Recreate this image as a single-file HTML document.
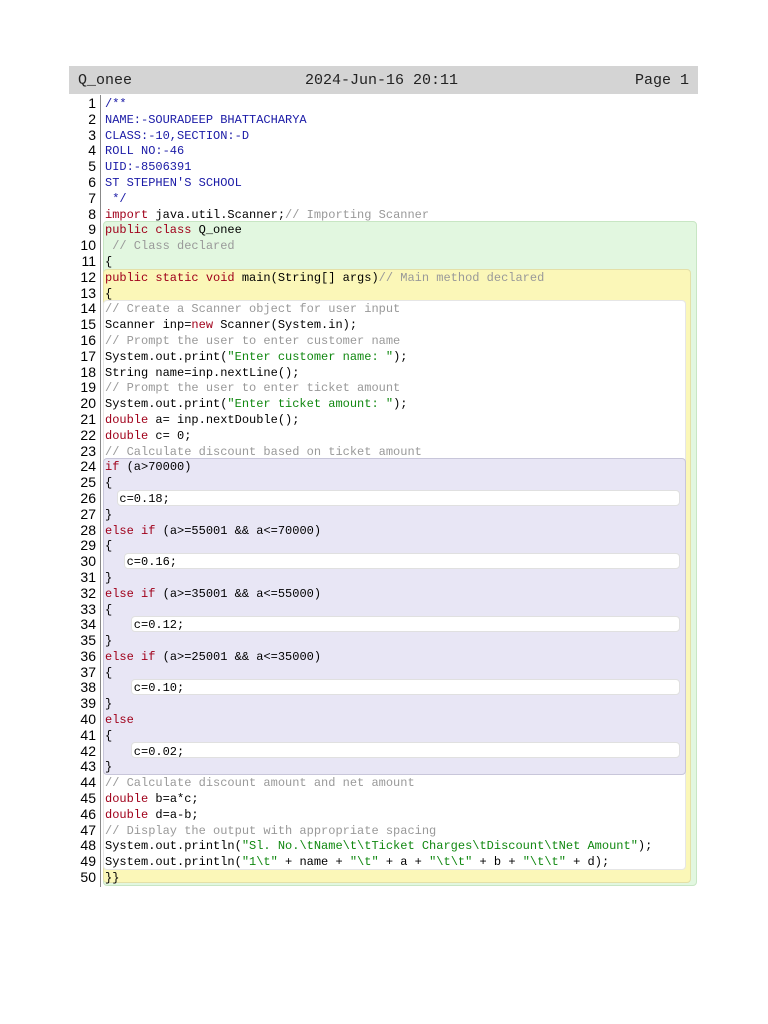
<!DOCTYPE html>
<html><head><style>
body{margin:0;background:#fff;width:768px;height:1024px;position:relative;overflow:hidden;font-family:"Liberation Mono",monospace}
.hdr{position:absolute;left:69px;top:66px;width:629px;height:28px;background:#d4d4d4;font-size:15px;color:#222;line-height:29px}
.hdr span{position:absolute;top:0}
.box{position:absolute;border-radius:4px;box-sizing:border-box}
.vl{position:absolute;left:100px;top:95px;width:1px;height:792px;background:#888}
.nums{position:absolute;left:70px;top:96px;width:26px;text-align:right;font-family:"Liberation Sans",sans-serif;font-size:14px;line-height:15.8px;color:#000;margin:0}
pre{position:absolute;left:105px;top:97px;margin:0;font-size:12px;line-height:15.8px;color:#000;font-family:"Liberation Mono",monospace}
.k{color:#a0001a}.c{color:#999}.s{color:#118811}.d{color:#1a1aa6}
</style></head><body>
<div class="hdr"><span style="left:9px">Q_onee</span><span style="left:236px">2024-Jun-16 20:11</span><span style="right:9px">Page 1</span></div>
<div class="box" style="left:103px;top:221px;width:594px;height:665px;background:#e2f7e0;border:1px solid #c8e6c4"></div>
<div class="box" style="left:103px;top:269px;width:588px;height:614px;background:#fbf7b8;border:1px solid #e4e0a8"></div>
<div class="box" style="left:103px;top:300px;width:583px;height:570px;background:#fff;border:1px solid #e6e6e6"></div>
<div class="box" style="left:103px;top:458px;width:583px;height:317px;background:#e8e6f5;border:1px solid #c8c6da"></div>
<div class="box" style="left:117px;top:490px;width:563px;height:16px;background:#fff;border:1px solid #e0e0e0"></div>
<div class="box" style="left:124px;top:553px;width:556px;height:16px;background:#fff;border:1px solid #e0e0e0"></div>
<div class="box" style="left:131px;top:616px;width:549px;height:16px;background:#fff;border:1px solid #e0e0e0"></div>
<div class="box" style="left:131px;top:679px;width:549px;height:16px;background:#fff;border:1px solid #e0e0e0"></div>
<div class="box" style="left:131px;top:742px;width:549px;height:16px;background:#fff;border:1px solid #e0e0e0"></div>
<div class="vl"></div>
<pre class="nums">1
2
3
4
5
6
7
8
9
10
11
12
13
14
15
16
17
18
19
20
21
22
23
24
25
26
27
28
29
30
31
32
33
34
35
36
37
38
39
40
41
42
43
44
45
46
47
48
49
50</pre>
<pre><span class="d">/**
NAME:-SOURADEEP BHATTACHARYA
CLASS:-10,SECTION:-D
ROLL NO:-46
UID:-8506391
ST STEPHEN'S SCHOOL
 */</span>
<span class="k">import</span> java.util.Scanner;<span class="c">// Importing Scanner</span>
<span class="k">public class</span> Q_onee
<span class="c"> // Class declared</span>
{
<span class="k">public static void</span> main(String[] args)<span class="c">// Main method declared</span>
{
<span class="c">// Create a Scanner object for user input</span>
Scanner inp=<span class="k">new</span> Scanner(System.in);
<span class="c">// Prompt the user to enter customer name</span>
System.out.print(<span class="s">"Enter customer name: "</span>);
String name=inp.nextLine();
<span class="c">// Prompt the user to enter ticket amount</span>
System.out.print(<span class="s">"Enter ticket amount: "</span>);
<span class="k">double</span> a= inp.nextDouble();
<span class="k">double</span> c= 0;
<span class="c">// Calculate discount based on ticket amount</span>
<span class="k">if</span> (a&gt;70000)
{
  c=0.18;
}
<span class="k">else if</span> (a&gt;=55001 &amp;&amp; a&lt;=70000)
{
   c=0.16;
}
<span class="k">else if</span> (a&gt;=35001 &amp;&amp; a&lt;=55000)
{
    c=0.12;
}
<span class="k">else if</span> (a&gt;=25001 &amp;&amp; a&lt;=35000)
{
    c=0.10;
}
<span class="k">else</span>
{
    c=0.02;
}
<span class="c">// Calculate discount amount and net amount</span>
<span class="k">double</span> b=a*c;
<span class="k">double</span> d=a-b;
<span class="c">// Display the output with appropriate spacing</span>
System.out.println(<span class="s">"Sl. No.\tName\t\tTicket Charges\tDiscount\tNet Amount"</span>);
System.out.println(<span class="s">"1\t"</span> + name + <span class="s">"\t"</span> + a + <span class="s">"\t\t"</span> + b + <span class="s">"\t\t"</span> + d);
}}</pre>
</body></html>
